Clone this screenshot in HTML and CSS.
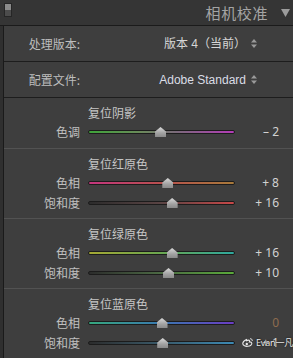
FILE: index.html
```html
<!DOCTYPE html>
<html lang="zh">
<head>
<meta charset="utf-8">
<link rel="stylesheet" href="styles.css">
</head>
<body>
<div class="header">
  <div class="switch"><span class="sw-top"></span><span class="sw-bot"></span></div>
  <div class="title">相机校准<svg class="tri" width="9" height="9" viewBox="0 0 9 9"><polygon points="0,1 9,1 4.5,9" fill="#9c9c9c"/></svg></div>
</div>
<div class="panel">
  <div class="prow">
    <div class="plabel">处理版本:</div>
    <div class="pvalue">版本 4（当前）<svg class="updown" width="6" height="9" viewBox="0 0 6 9"><polygon points="0,3.5 3,0 6,3.5" fill="#9a9a9a"/><polygon points="0,5.5 3,9 6,5.5" fill="#9a9a9a"/></svg></div>
  </div>
  <div class="prow">
    <div class="plabel">配置文件:</div>
    <div class="pvalue profile">Adobe Standard<svg class="updown" width="6" height="9" viewBox="0 0 6 9"><polygon points="0,3.5 3,0 6,3.5" fill="#9a9a9a"/><polygon points="0,5.5 3,9 6,5.5" fill="#9a9a9a"/></svg></div>
  </div>

  <div class="section first">
    <div class="stitle">复位阴影</div>
    <div class="srow">
      <div class="slabel">色调</div>
      <div class="track tint"><span class="thumb" style="left:49%"></span></div>
      <div class="val">– 2</div>
    </div>
  </div>

  <div class="section">
    <div class="stitle">复位红原色</div>
    <div class="srow">
      <div class="slabel">色相</div>
      <div class="track red-hue"><span class="thumb" style="left:54%"></span></div>
      <div class="val">+ 8</div>
    </div>
    <div class="srow">
      <div class="slabel">饱和度</div>
      <div class="track red-sat"><span class="thumb" style="left:57%"></span></div>
      <div class="val">+ 16</div>
    </div>
  </div>

  <div class="section">
    <div class="stitle">复位绿原色</div>
    <div class="srow">
      <div class="slabel">色相</div>
      <div class="track green-hue"><span class="thumb" style="left:57%"></span></div>
      <div class="val">+ 16</div>
    </div>
    <div class="srow">
      <div class="slabel">饱和度</div>
      <div class="track green-sat"><span class="thumb" style="left:54.5%"></span></div>
      <div class="val">+ 10</div>
    </div>
  </div>

  <div class="section last">
    <div class="stitle">复位蓝原色</div>
    <div class="srow">
      <div class="slabel">色相</div>
      <div class="track blue-hue"><span class="thumb" style="left:50%"></span></div>
      <div class="val zero">0</div>
    </div>
    <div class="srow">
      <div class="slabel">饱和度</div>
      <div class="track blue-sat"><span class="thumb" style="left:50.5%"></span></div>
      <div class="val">+ 1</div>
    </div>
  </div>
</div>
<div class="watermark">
  <svg width="11" height="9" viewBox="0 0 11 9"><path d="M4.5 1.5C2.2 2.6 0.6 4.4 0.8 5.9C1 7.6 3.4 8.6 5.8 8.3C8.3 8 10 6.7 9.8 5.3C9.6 4.1 8.3 3.8 7.4 4C7.8 3 7.6 2.2 6.6 2.1C6 2 5.1 2.4 4.5 2.7Z" fill="none" stroke="#e6e6e6" stroke-width="1.1"/><circle cx="4.8" cy="6" r="1.2" fill="#e6e6e6"/><path d="M8 0.6a2.4 2.4 0 0 1 2.4 2.4" fill="none" stroke="#e6e6e6" stroke-width="0.9"/></svg>
  <span class="wm-text">Evan一凡</span>
</div>
</body>
</html>
```
FILE: styles.css
```css
html, body {
  margin: 0;
  padding: 0;
}
body {
  width: 293px;
  height: 358px;
  overflow: hidden;
  background: #2f2f2f;
  font-family: "Noto Sans", "Noto Sans CJK SC", sans-serif;
  color: #c4c4c4;
  position: relative;
}
.header {
  height: 25px;
  display: flex;
  justify-content: space-between;
  align-items: center;
  padding: 0 3px 0 4px;
  background: #353535;
  border-bottom: 1px solid #1b1b1b;
}
.switch {
  align-self: flex-start;
  margin-top: 3px;
  width: 8px;
  height: 14px;
  display: flex;
  flex-direction: column;
  border: 1px solid #262626;
  box-sizing: border-box;
}
.sw-top {
  flex: 1;
  background: #8a8a8a;
}
.sw-bot {
  flex: 1;
  background: #4c4c4c;
}
.title {
  display: flex;
  align-items: center;
  font-family: "Noto Sans CJK SC", sans-serif;
  font-size: 15px;
  line-height: 20px;
  letter-spacing: 0.6px;
  color: #a4a4a4;
}
.tri {
  margin-left: 13px;
}
.panel {
  margin-left: 3px;
  border-left: 1px solid #1a1a1a;
  background: #3e3e3e;
  height: 332px;
}
.prow {
  height: 35px;
  display: grid;
  grid-template-columns: 76px 177px;
  align-items: center;
  border-bottom: 1px solid #1d1d1d;
  font-size: 12px;
  line-height: 16px;
}
.plabel {
  text-align: right;
  color: #bdbdbd;
  font-family: "Noto Sans CJK SC", sans-serif;
}
.pvalue {
  display: flex;
  justify-content: flex-end;
  align-items: center;
  gap: 5px;
  color: #d6d6d6;
  font-family: "Liberation Sans", "Noto Sans CJK SC", sans-serif;
}
.profile {
  color: #dadde6;
}
.updown {
  flex: none;
}
.section {
  padding: 6px 0 5px;
  border-bottom: 1px solid #525252;
}
.section.first {
  padding-bottom: 6px;
}
.section.last {
  border-bottom: none;
}
.stitle {
  height: 18px;
  line-height: 18px;
  padding-left: 84px;
  font-family: "Noto Sans CJK SC", sans-serif;
  font-size: 12px;
  color: #c6c6c6;
}
.srow {
  height: 20px;
  display: grid;
  grid-template-columns: 84px 147px 44px;
  align-items: center;
  font-size: 12px;
}
.slabel {
  padding-right: 8px;
  text-align: right;
  font-family: "Noto Sans CJK SC", sans-serif;
  color: #c0c0c0;
  line-height: 16px;
}
.track {
  position: relative;
  height: 2px;
  border: 1px solid #1c1c1c;
  border-radius: 2px;
}
.thumb {
  position: absolute;
  top: -4px;
  width: 11px;
  height: 10px;
  margin-left: -5px;
  background: linear-gradient(#dadada, #a2a2a2 60%, #8a8a8a);
  clip-path: polygon(50% 0, 100% 45%, 100% 100%, 0 100%, 0 45%);
}
.val {
  text-align: right;
  color: #d2d2d2;
  line-height: 16px;
}
.val.zero {
  color: #8e6c4e;
}
.tint {
  background: linear-gradient(90deg, #3fa43a, #6a8a5a 35%, #7a6a7a 60%, #b43cb8);
}
.red-hue {
  background: linear-gradient(90deg, #c4367e, #b8504e 50%, #a87a3a);
}
.red-sat {
  background: linear-gradient(90deg, #2c2c2c, #5a4444 50%, #c84848);
}
.green-hue {
  background: linear-gradient(90deg, #a4a834, #6aa650 50%, #2ea89e);
}
.green-sat {
  background: linear-gradient(90deg, #2c2c2c, #4c6a44 50%, #5aaa3a);
}
.blue-hue {
  background: linear-gradient(90deg, #36a87e, #3a78b0 50%, #6a3cc4);
}
.blue-sat {
  background: linear-gradient(90deg, #2c2c2c, #3a5a6a 50%, #3c8ab4);
}
.watermark {
  position: absolute;
  left: 242px;
  top: 337px;
  display: flex;
  align-items: center;
  gap: 3px;
  white-space: nowrap;
  font-family: "Noto Sans", "Noto Sans CJK SC", sans-serif;
  font-size: 9px;
  line-height: 11px;
  color: #e8e8e8;
  text-shadow: 0 0 2px #000;
}
.wm-text {
  letter-spacing: -0.2px;
}
```
